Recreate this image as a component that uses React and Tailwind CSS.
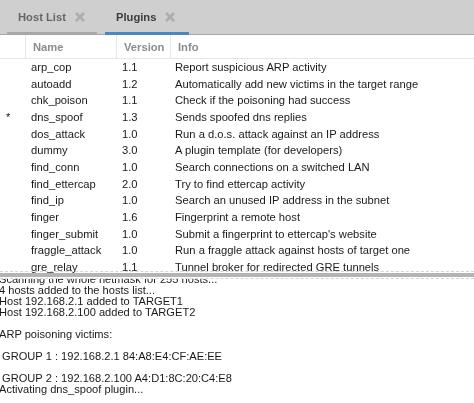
const plugins = [
  ['', 'arp_cop', '1.1', 'Report suspicious ARP activity'],
  ['', 'autoadd', '1.2', 'Automatically add new victims in the target range'],
  ['', 'chk_poison', '1.1', 'Check if the poisoning had success'],
  ['*', 'dns_spoof', '1.3', 'Sends spoofed dns replies'],
  ['', 'dos_attack', '1.0', 'Run a d.o.s. attack against an IP address'],
  ['', 'dummy', '3.0', 'A plugin template (for developers)'],
  ['', 'find_conn', '1.0', 'Search connections on a switched LAN'],
  ['', 'find_ettercap', '2.0', 'Try to find ettercap activity'],
  ['', 'find_ip', '1.0', 'Search an unused IP address in the subnet'],
  ['', 'finger', '1.6', 'Fingerprint a remote host'],
  ['', 'finger_submit', '1.0', "Submit a fingerprint to ettercap's website"],
  ['', 'fraggle_attack', '1.0', 'Run a fraggle attack against hosts of target one'],
  ['', 'gre_relay', '1.1', 'Tunnel broker for redirected GRE tunnels'],
];

const logLines = [
  'Scanning the whole netmask for 255 hosts...',
  '4 hosts added to the hosts list...',
  'Host 192.168.2.1 added to TARGET1',
  'Host 192.168.2.100 added to TARGET2',
  '',
  'ARP poisoning victims:',
  '',
  ' GROUP 1 : 192.168.2.1 84:A8:E4:CF:AE:EE',
  '',
  ' GROUP 2 : 192.168.2.100 A4:D1:8C:20:C4:E8',
  'Activating dns_spoof plugin...',
];

function CloseIcon() {
  return (
    <svg width="10" height="10" viewBox="0 0 10 10" className="text-[#adadad]">
      <path d="M1 1 9 9M9 1 1 9" stroke="currentColor" strokeWidth="2.6" fill="none" />
    </svg>
  );
}

function Tab({ label, active, width }) {
  return (
    <div className={`flex items-center h-[35px] pl-[11px] pt-[2px] border-b-[3px] ${width} ${active ? 'border-[#4a86c5] text-[#3c3c3c]' : 'border-[#a8a8a8] text-[#666666]'}`}>
      <span className="text-[11.2px] font-bold">{label}</span>
      <span className="ml-[9px]"><CloseIcon /></span>
    </div>
  );
}

export default function App() {
  return (
    <div className="w-[474px] h-[403px] overflow-hidden flex flex-col bg-white font-['Liberation_Sans',Arial,sans-serif] text-[#1a1a1a] blur-[0.3px]">
      <div className="flex gap-[8px] h-[35px] pl-[7px] bg-[#cfcfcf] shrink-0 border-b border-[#a8a8a8]">
        <Tab label="Host List" width="w-[90px]" />
        <Tab label="Plugins" active width="w-[84px]" />
      </div>

      <div className="flex h-[24px] shrink-0 border-b border-[#e6e6e6] text-[11.2px] font-bold text-[#8c8c8c]">
        <div className="w-[26px] border-r border-[#e6e6e6]" />
        <div className="w-[91px] pl-[7px] pt-[1px] border-r border-[#e6e6e6] flex items-center">Name</div>
        <div className="w-[54px] pl-[7px] pt-[1px] border-r border-[#e6e6e6] flex items-center">Version</div>
        <div className="flex-1 pl-[7px] pt-[1px] flex items-center">Info</div>
      </div>

      {/* last row runs into the splitter, same as the real window */}
      <div className="h-[212px] shrink-0 text-[11.2px]">
        {plugins.map((p) => (
          <div key={p[1]} className="flex h-[16.67px] items-center">
            <div className="w-[31px] pl-[6px]">{p[0]}</div>
            <div className="w-[91px]">{p[1]}</div>
            <div className="w-[53px]">{p[2]}</div>
            <div className="flex-1 whitespace-nowrap">{p[3]}</div>
          </div>
        ))}
      </div>

      <div className="h-[8px] shrink-0 flex items-center border-y border-dashed border-[#d4d4d4]">
        <div className="h-[4px] w-full bg-[#b4b4b4]" />
      </div>

      <div className="flex-1 min-h-0 overflow-hidden flex flex-col justify-end pb-[8px] text-[11.1px] leading-[11px] whitespace-pre">
        {logLines.map((line, i) => (
          <div key={i} className="h-[11px] shrink-0 -ml-[1px]">{line}</div>
        ))}
      </div>
    </div>
  );
}
